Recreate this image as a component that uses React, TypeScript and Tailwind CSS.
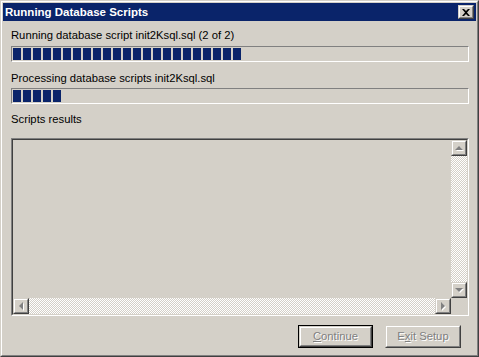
import React from 'react';

const font = { fontFamily: '"Liberation Sans", Arial, sans-serif' };

// Classic raised 3D edge used by buttons and scrollbar arrows
function Raised({ className = '', children }: { className?: string; children?: React.ReactNode }) {
    return (
        <div className={`border border-t-[#d4d0c8] border-l-[#d4d0c8] border-r-[#404040] border-b-[#404040] bg-[#d4d0c8] ${className}`}>
            <div className="w-full h-full border border-t-white border-l-white border-r-[#808080] border-b-[#808080] flex items-center justify-center">
                {children}
            </div>
        </div>
    );
}

function Arrow({ dir }: { dir: 'up' | 'down' | 'left' | 'right' }) {
    const pts: Record<string, string> = {
        up: '0,5 4,1 8,5',
        down: '0,1 4,5 8,1',
        left: '5,0 1,4 5,8',
        right: '1,0 5,4 1,8',
    };
    const size = dir === 'up' || dir === 'down' ? { w: 9, h: 7 } : { w: 7, h: 9 };
    return (
        <svg width={size.w} height={size.h} viewBox={`0 0 ${size.w} ${size.h}`}>
            <polygon points={pts[dir]} fill="#ffffff" transform="translate(1,1)" />
            <polygon points={pts[dir]} fill="#808080" />
        </svg>
    );
}

function ProgressBar({ blocks }: { blocks: number }) {
    return (
        <div className="w-[458px] h-[16px] border border-t-[#808080] border-l-[#808080] border-r-white border-b-white p-[1px] flex gap-[2px]">
            {Array.from({ length: blocks }).map((_, i) => (
                <div key={i} className="w-[8px] h-[12px] bg-[#0a246a]" />
            ))}
        </div>
    );
}

function Button({ label, hot, isDefault }: { label: string; hot: number; isDefault?: boolean }) {
    const text = (
        <span className="text-[11.25px] leading-[13px] text-[#808080] [text-shadow:1px_1px_0_#ffffff]">
            {label.slice(0, hot)}
            <span className="underline">{label[hot]}</span>
            {label.slice(hot + 1)}
        </span>
    );
    if (isDefault) {
        return (
            <div className="w-[75px] h-[23px] border border-black">
                <Raised className="w-full h-full">{text}</Raised>
            </div>
        );
    }
    return <Raised className="w-[76px] h-[23px]">{text}</Raised>;
}

const track = 'bg-[repeating-conic-gradient(#ffffff_0_25%,#d4d0c8_0_50%)] bg-[length:2px_2px]';

export default function App() {
    return (
        <div style={font} className="w-[479px] h-[357px] bg-[#d4d0c8] border border-t-[#d4d0c8] border-l-[#d4d0c8] border-r-[#404040] border-b-[#404040] text-black">
            <div className="w-full h-full border border-t-white border-l-white border-r-[#808080] border-b-[#808080] p-[1px] flex flex-col">
                {/* Title bar */}
                <div className="h-[18px] bg-[#0a246a] flex items-center justify-between pl-[2px] pr-[2px] shrink-0">
                    <span className="text-white font-bold text-[11.5px] leading-[13px]">Running Database Scripts</span>
                    <Raised className="w-[16px] h-[14px]">
                        <svg width="8" height="7" viewBox="0 0 8 7">
                            <path d="M0 0h2l2 2 2-2h2L5 3.5 8 7H6L4 5 2 7H0l3-3.5z" fill="#000" />
                        </svg>
                    </Raised>
                </div>

                {/* Body */}
                <div className="flex flex-col pl-[8px] pt-[8px] text-[11.25px]">
                    <div className="leading-[13px] h-[13px]">Running database script init2Ksql.sql (2 of 2)</div>
                    <div className="mt-[4px]">
                        <ProgressBar blocks={23} />
                    </div>
                    <div className="mt-[10px] leading-[13px] h-[13px]">Processing database scripts init2Ksql.sql</div>
                    <div className="mt-[3px]">
                        <ProgressBar blocks={5} />
                    </div>
                    <div className="mt-[9px] leading-[13px] h-[13px]">Scripts results</div>

                    {/* Results box */}
                    <div className="mt-[12px] w-[458px] h-[178px] border border-t-[#808080] border-l-[#808080] border-r-white border-b-white">
                        <div className="w-full h-full border border-t-[#404040] border-l-[#404040] border-r-[#d4d0c8] border-b-[#d4d0c8] flex flex-col">
                            <div className="flex-1 flex">
                                <div className="flex-1" />
                                <div className="w-[16px] flex flex-col">
                                    <Raised className="w-[16px] h-[16px]"><Arrow dir="up" /></Raised>
                                    <div className={`flex-1 ${track}`} />
                                    <Raised className="w-[16px] h-[16px]"><Arrow dir="down" /></Raised>
                                </div>
                            </div>
                            <div className="h-[16px] flex">
                                <Raised className="w-[16px] h-[16px]"><Arrow dir="left" /></Raised>
                                <div className={`flex-1 ${track}`} />
                                <Raised className="w-[16px] h-[16px]"><Arrow dir="right" /></Raised>
                                <div className="w-[16px]" />
                            </div>
                        </div>
                    </div>

                    {/* Buttons */}
                    <div className="mt-[9px] flex pl-[287px] gap-[12px]">
                        <Button label="Continue" hot={0} isDefault />
                        <Button label="Exit Setup" hot={1} />
                    </div>
                </div>
            </div>
        </div>
    );
}
